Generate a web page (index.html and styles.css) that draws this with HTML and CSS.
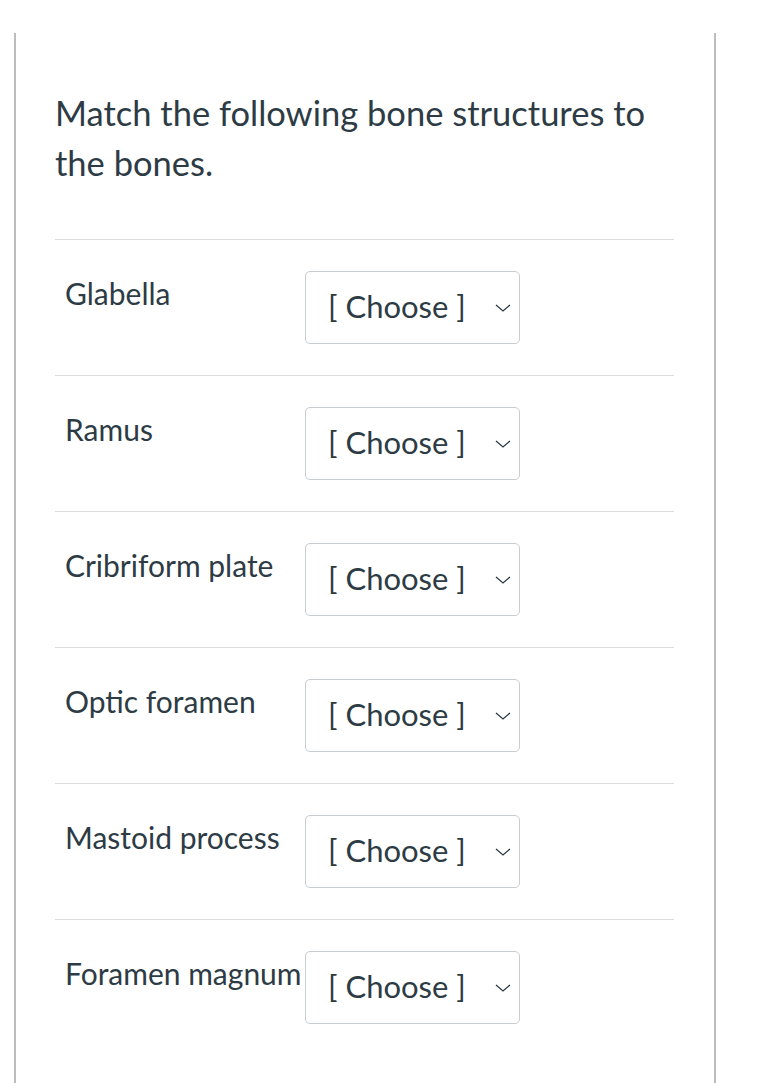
FILE: index.html
```html
<!DOCTYPE html>
<html>
<head>
<meta charset="utf-8">
<link rel="stylesheet" href="styles.css">
</head>
<body>
<div class="panel">
  <div class="inner">
    <p class="question">Match the following bone structures to the bones.</p>
    <div class="rows">
      <div class="row"><div class="label">Glabella</div><div class="select"><span>[ Choose ]</span><svg class="chev" viewBox="0 0 16 8" width="16" height="8"><path d="M1 1 L8 7 L15 1" fill="none" stroke="#2d3b45" stroke-width="1.3"/></svg></div></div>
      <div class="row"><div class="label">Ramus</div><div class="select"><span>[ Choose ]</span><svg class="chev" viewBox="0 0 16 8" width="16" height="8"><path d="M1 1 L8 7 L15 1" fill="none" stroke="#2d3b45" stroke-width="1.3"/></svg></div></div>
      <div class="row"><div class="label">Cribriform plate</div><div class="select"><span>[ Choose ]</span><svg class="chev" viewBox="0 0 16 8" width="16" height="8"><path d="M1 1 L8 7 L15 1" fill="none" stroke="#2d3b45" stroke-width="1.3"/></svg></div></div>
      <div class="row"><div class="label">Optic foramen</div><div class="select"><span>[ Choose ]</span><svg class="chev" viewBox="0 0 16 8" width="16" height="8"><path d="M1 1 L8 7 L15 1" fill="none" stroke="#2d3b45" stroke-width="1.3"/></svg></div></div>
      <div class="row"><div class="label">Mastoid process</div><div class="select"><span>[ Choose ]</span><svg class="chev" viewBox="0 0 16 8" width="16" height="8"><path d="M1 1 L8 7 L15 1" fill="none" stroke="#2d3b45" stroke-width="1.3"/></svg></div></div>
      <div class="row"><div class="label">Foramen magnum</div><div class="select"><span>[ Choose ]</span><svg class="chev" viewBox="0 0 16 8" width="16" height="8"><path d="M1 1 L8 7 L15 1" fill="none" stroke="#2d3b45" stroke-width="1.3"/></svg></div></div>
    </div>
  </div>
</div>
</body>
</html>
```
FILE: styles.css
```css
html, body {
  margin: 0;
  padding: 0;
  background: #ffffff;
}
body {
  font-family: Lato, "Open Sans", sans-serif;
  color: #2d3b45;
  overflow: hidden;
}
.panel {
  margin: 33px 0 0 14px;
  width: 698px;
  min-height: 1100px;
  border-left: 2px solid #bcbcbc;
  border-right: 2px solid #bcbcbc;
}
.inner {
  padding: 55px 40px 0 39px;
}
.question {
  margin: 0 0 51px 0;
  font-size: 34.5px;
  line-height: 50px;
}
.row {
  display: flex;
  align-items: flex-start;
  border-top: 1px solid #dcdcdc;
  padding: 31px 0 31px 10px;
}
.label {
  width: 240px;
  flex: none;
  font-size: 30px;
  line-height: 36px;
  padding-top: 4px;
  white-space: nowrap;
}
.select {
  box-sizing: border-box;
  width: 215px;
  height: 73px;
  border: 1px solid #c8cdd1;
  border-radius: 5px;
  display: flex;
  align-items: center;
  justify-content: space-between;
  padding: 0 8px 3px 22px;
  font-size: 31px;
}
.chev {
  display: block;
  margin-top: 4px;
}
```
